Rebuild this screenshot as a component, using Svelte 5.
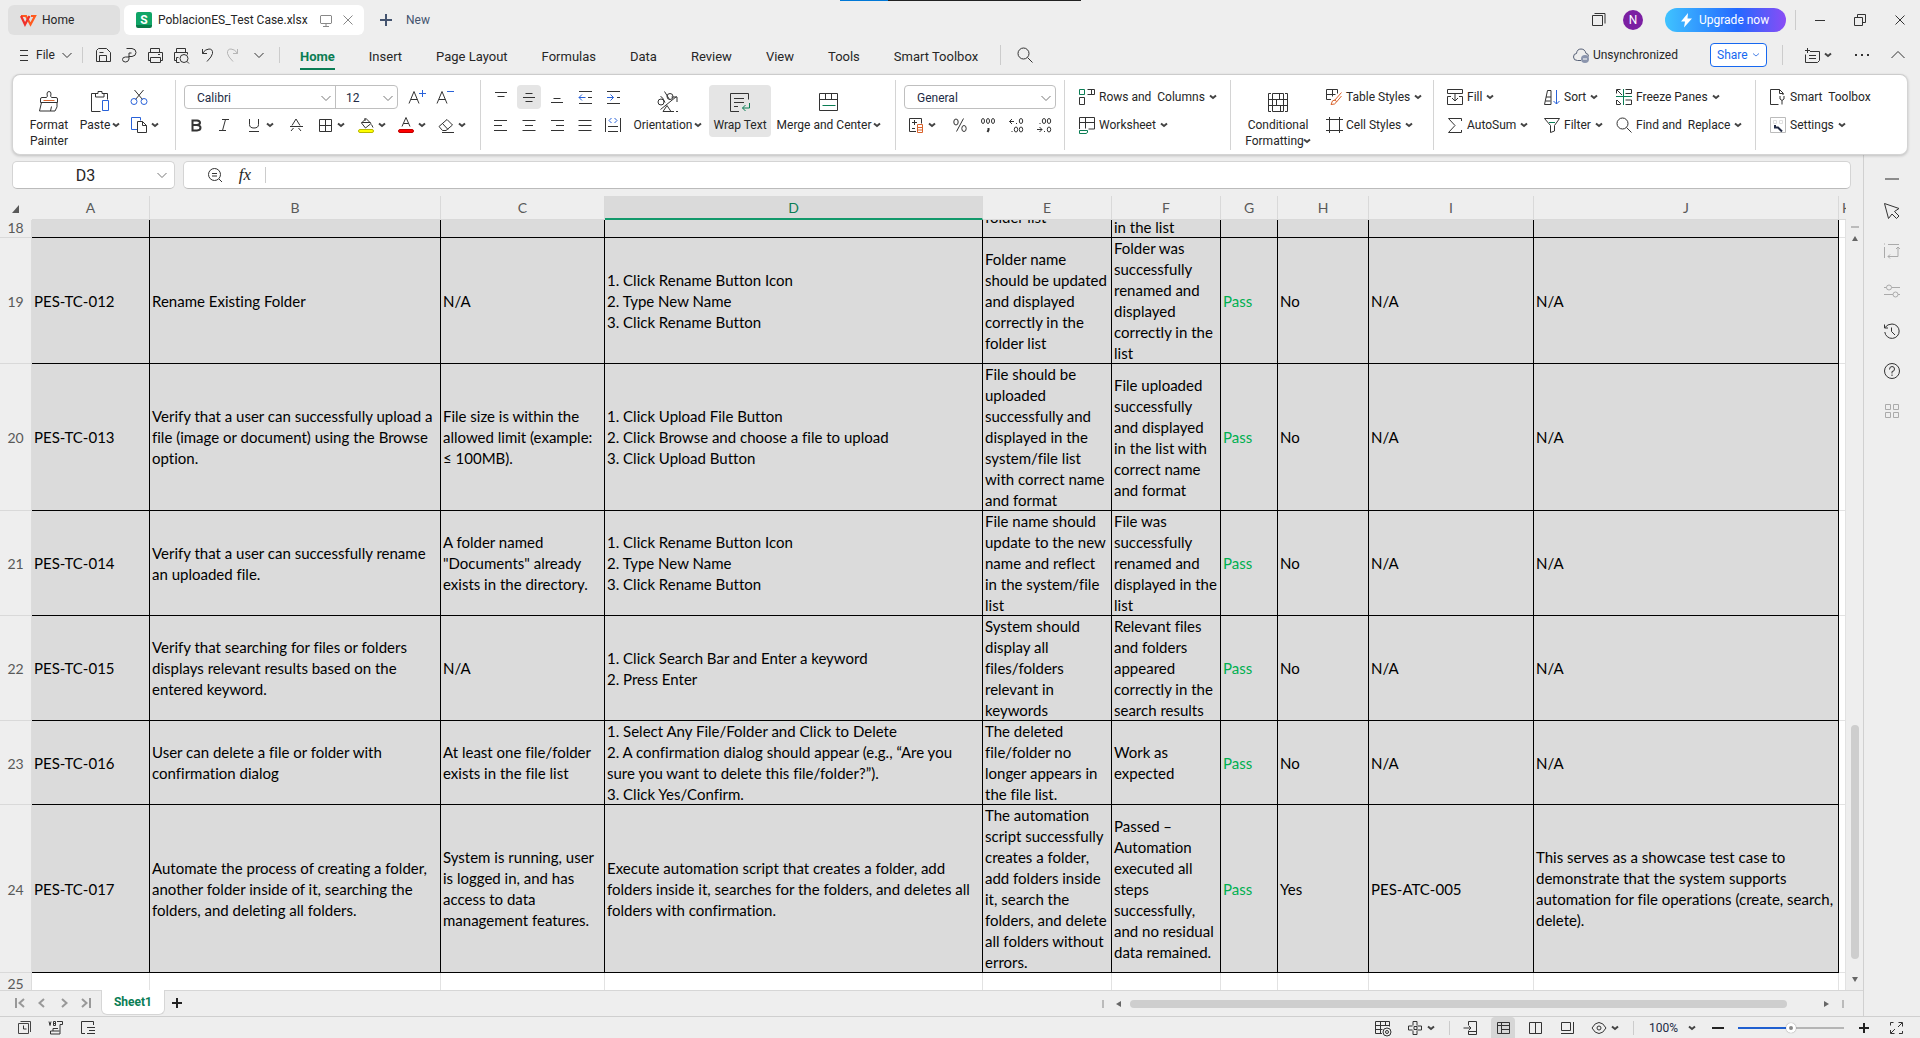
<script>
  const icons = {
    wps: '<path d="M5 8h5l4.500 8.500L19 8h-4" stroke="#ff5a1f" stroke-width="2.200"/><path d="M5 8l4 8.500L13.500 8" stroke="#f0302b" stroke-width="2.200"/>',
    monitor: '<path d="M7 7.500h10a.8.8 0 0 1 .5.500v7a.8.8 0 0 1-.5.500H7a.8.8 0 0 1-.5-.5V8a.8.8 0 0 1 .5-.5zM12 15.500v2.500M9 18.500h6" stroke="#888"/>',
    close: '<path d="M7.500 7.500l9 9M16.500 7.500l-9 9"/>',
    closeTab: '<path d="M7.500 7.500l9 9M16.500 7.500l-9 9" stroke="#888"/>',
    plus: '<path d="M12 6v12M6 12h12" stroke="#44546f" stroke-width="2"/>',
    copyWin: '<path d="M5.500 7.500h10v10h-10zM7.500 5.500h10.500v10"/>',
    bolt: '<path d="M13 5l-7 8.500h4L9 19.500l8-9h-4.500z" fill="#fff" stroke="none"/>',
    min: '<path d="M7 12.500h10"/>',
    restore: '<path d="M6.500 9.500h8v8h-8zM9.500 9.500v-3h8v8h-3"/>',
    burger: '<path d="M8 7.500h8M8 12.500h8M8 17.500h8"/>',
    save: '<path d="M7.500 5.500h8l4 4v9h-14v-11zM8.500 18.500v-6h7v6M8.500 9.500h4"/>',
    link: '<path d="M9.500 5.500h5.500q4 .5 4 4t-4 4h-3v2.500q-.5 3-3.500 3t-3-2.500 3-2.500h3.500v-4h2.500"/>',
    print: '<path d="M7.500 9.500v-4h9v4M7.500 17.500h-2v-8h14v8h-2M7.500 14.500h10v5h-10zM15 11.500h2"/>',
    preview: '<path d="M7.500 9.500v-4h9v4M7.500 17.500h-2v-8h13v2M7.500 19.500h3M7.500 19.500v-5h2"/><circle cx="15" cy="15.500" r="4"/><path d="M18 18.500l2 2"/>',
    undo: '<path d="M7.500 6v4.500H12M7.500 10.500Q10 6 14 6t3.500 4.500Q17 13.500 12 18.500"/>',
    redo: '<path d="M16.500 6v4.500H12M16.500 10.500Q14 6 10 6t-3.500 4.500Q7 13.500 12 18.500" stroke="#b5b5b5"/>',
    down: '<path d="M7.500 10l4.500 4.500 4.500-4.500"/>',
    up: '<path d="M5.500 15l6.500-6.500 6.500 6.500"/>',
    search: '<circle cx="10.500" cy="10.500" r="5.500"/><path d="M14.500 14.500l5 5"/>',
    cloud: '<path d="M12 17.500H8.500q-4 0-4-3.500t3-3.500q.5-4.500 4.500-4.500t5 4.500q2.500 0 2.500 3" stroke="#555f75"/><circle cx="16" cy="16" r="4" fill="#8b95ad" stroke="none"/><path d="M14 16h4" stroke="#fff"/>',
    addNote: '<path d="M10 8.500h9.500v9l-2 2h-12v-8M5 7.500h5M7.500 5v5M9 12.500h7M9 15.500h7"/>',
    dots: '<path d="M5 11h2v2H5zM11 11h2v2h-2zM17 11h2v2h-2z" fill="#333" stroke="none"/>',
    painter: '<path d="M3.500 12.500v-3.500q0-1.500 1.500-1.500h4.500q1.500-1 .5-3.500 0-2.500 2-2.500t2 2.500q-1 2.500.5 3.500h4.500q1.500 0 1.500 1.500v3.500zM4.500 12.500l-2 8.500h15.500q3-4 2-8.500M14.500 16.500l-1 4.500"/><path d="M6.500 10.500h11" stroke="#d9622b"/>',
    paste: '<path d="M8 3.500H3.500v18h9M16 3.500h3.500v6M7.500 3.500h2.500v-2h4v2h2v3.500H7.500z"/><path d="M14.500 10.500h6v10h-6z" stroke="#2962d9"/>',
    cut: '<path d="M7.500 5l8 9.500M16.500 5l-8 9.500"/><circle cx="7" cy="16.500" r="3" stroke="#2962d9"/><circle cx="17" cy="16.500" r="3" stroke="#2962d9"/>',
    copy: '<path d="M10 16.500H4.500v-12h9v3" stroke="#2962d9"/><path d="M10.500 8.500h5l4 4v7h-9zM15.500 8.500v4h4"/>',
    fontUp: '<path d="M4 18.500l5-12 5 12M6 14.500h6.500"/><path d="M17.500 5v7M14 8.500h7" stroke="#2962d9"/>',
    fontDown: '<path d="M4 18.500l5-12 5 12M6 14.500h6.500"/><path d="M14 6.500h7" stroke="#2962d9"/>',
    bold: '<path d="M8.500 7.500h4.500q3 .3 3 2.300t-3 2.200q3.500.3 3.500 2.800t-3.500 2.700H8.500zM9 12h4" stroke-width="2"/>',
    italic: '<path d="M10 6.500h7M7 17.500h7M13.500 6.500l-3 11"/>',
    underline: '<path d="M7.500 6v5.500q0 3.500 4.500 3.500t4.500-3.500V6M7 18.500h10"/>',
    strike: '<path d="M8 12.500l4-6.500 4 6.500M7 18l2.500-3M17 18l-2.500-3M6 13.500h13"/>',
    border: '<path d="M6.500 6.500h12v12h-12zM12.500 6.500v12M6.500 12.500h12"/>',
    fill: '<path d="M12 5.500l5 5-5.500 4.500-4-5zM7.500 9.500h9M11 8V5M17.500 11.500l1.500 3"/><rect x="4.500" y="16.500" width="15" height="3" rx="1.500" fill="#ffff00" stroke="#b8b800"/>',
    fontColor: '<path d="M8 13.500l4-9 4 9M9.500 10.500h5"/><rect x="4.500" y="16.500" width="15" height="3" rx="1.500" fill="#ff0000" stroke="#c00000"/>',
    eraser: '<path d="M5 13.500L13 6.500l5.500 5.500-6.500 5.500H8.500zM8.500 10.500l5.500 6M8 19.500h12"/>',
    top: '<path d="M6 7.500h12M8.500 11.500h7"/>',
    middle: '<path d="M8.500 8.500h7M6 12.500h12M8.500 16.500h7"/>',
    bottom: '<path d="M8.500 13.500h7M6 17.500h12"/>',
    outdent: '<path d="M6 6.500h13M6 18.500h13M15 12.500h4"/><path d="M12.500 12.500H6M9 9.500l-3 3 3 3" stroke="#2962d9"/>',
    indent: '<path d="M6 6.500h13M6 18.500h13M16 12.500h3"/><path d="M6 12.500h6.500M9.500 9.500l3 3-3 3" stroke="#2962d9"/>',
    left: '<path d="M5 7.500h13M5 12.500h8M5 17.500h13"/>',
    center: '<path d="M5.500 7.500h13M8 12.500h8M5.500 17.500h13"/>',
    right: '<path d="M6 7.500h13M11 12.500h8M6 17.500h13"/>',
    justify: '<path d="M5.500 7.500h13M5.500 12.500h13M5.500 17.500h13"/>',
    distribute: '<path d="M4.500 5v14M19.500 5v14M7 13.500h10M7 18.500h10"/><path d="M10.500 5L8 7.500l2.500 2.500M13.500 5L16 7.500 13.500 10" stroke="#2962d9"/>',
    orient: '<circle cx="5" cy="12" r="3"/><path d="M4.500 6.500q2 .5 3 3l1.500 3M8.500 1.500l5 8"/><circle cx="14" cy="6.500" r="3"/><path d="M4.500 19.500L20.500 6.500M15.500 7h5.500v5M7 21.500l4-6 4 6z"/><path d="M15 21.500h7" stroke-dasharray="3 2"/>',
    wrap: '<path d="M11 21.500H2.500v-18h18v6M6 8.500h10M6 12.500h10M6 16.500h4"/><path d="M21.500 13v5h-7M17.500 15l-3 3 3 3" stroke="#0a7d54"/>',
    merge: '<path d="M2.500 3.500h18v17h-18zM2.500 9.500h18M8.500 3.500v6M14.500 3.500v6"/><path d="M5.500 15.500h13" stroke="#0a7d54"/>',
    currency: '<path d="M12 18.500H5.500v-13h12v5M8 9.500h5M10.500 7v5M8 15.500h3"/><path d="M13.500 11.500h5v8h-5zM13.500 14.500h5M13.500 17h5" stroke="#d9622b"/>',
    percent: '<path d="M15.500 5.500l-7 13"/><ellipse cx="8" cy="9" rx="2.200" ry="3"/><ellipse cx="16" cy="15.500" rx="2.200" ry="3"/>',
    thousand: '<g><ellipse cx="7" cy="8" rx="1.500" ry="2.500"/><ellipse cx="12" cy="8" rx="1.500" ry="2.500"/><ellipse cx="17" cy="8" rx="1.500" ry="2.500"/><path d="M12.500 15v2l-1 2" stroke-width="2"/></g>',
    decInc: '<path d="M10 8.500H5.500M8 6l-2.500 2.500L8 11M12 10.500h1M7.500 18.500h1"/><ellipse cx="17" cy="8" rx="1.700" ry="2.500"/><ellipse cx="12" cy="16.500" rx="1.700" ry="2.500"/><ellipse cx="17" cy="16.500" rx="1.700" ry="2.500"/>',
    decDec: '<path d="M5 16.500h5M7.500 14l2.500 2.500L7.500 19M12 18.500h1M7.500 10.500h1"/><ellipse cx="12" cy="8" rx="1.700" ry="2.500"/><ellipse cx="17" cy="8" rx="1.700" ry="2.500"/><ellipse cx="17" cy="16.500" rx="1.700" ry="2.500"/>',
    rowscols: '<path d="M12.500 4.500h7v5h-7M16.500 4.500v5M4.500 12.500h5v7h-5z"/><path d="M4.500 4.500h5v5h-5z" stroke="#0a7d54"/>',
    worksheet: '<path d="M4.500 16v-11.500h15v11.500h-6M4.500 9.500h15M10.500 4.500v11"/><path d="M4.500 17.500h8v2l-1.500 1h-6.500z" stroke="#0a7d54"/>',
    cond: '<path d="M5 3.500H2.500v18H5M19 3.500h2.500v18H19M6.500 3.500h11v18h-11zM6.500 9.500h11M6.500 15.500h11M2.500 9.500h4M2.500 15.500h4M17.500 9.500h4M17.500 15.500h4M13.500 3.500v6M10.500 9.500v6M14.500 15.500v6"/>',
    tableStyles: '<path d="M9 14.500H4.500v-10h11v4M4.500 9.500h9M10.500 4.500v7"/><path d="M19.500 7.500l-7 8M9 19.500q1-5 4-4.500 3 1.500-.5 4zM19.500 11l-5 6" stroke="#d9622b"/>',
    cellStyles: '<path d="M7.500 4v16M17.500 4v16M4 6.500h17M4 17.500h17"/>',
    fillCells: '<path d="M4.500 8.500v-4h15v4zM8 11.500H4.500v8h15v-8H16M12 8.500v7M9 13l3 3 3-3"/>',
    sum: '<path d="M18.500 8V5.500h-13l6.500 7-6.500 7h13V17"/>',
    sort: '<path d="M4.500 19.500l3-14h3.500v14zM6 12h5M5.500 16h5"/><path d="M16.500 5v14M13.500 16l3 3 3-3" stroke="#2962d9"/>',
    filter: '<path d="M4.500 5.500h15l-5 7v5.500l-4 1.500v-7z"/><path d="M9 9.500h6" stroke="#0a7d54"/>',
    freeze: '<path d="M8.500 4.500h-4v4M13.500 4.500h6v4h-6M4.500 15v4.500h4M13.500 15h6v4.500h-6M5 5l5 5M5 15l4 4"/><path d="M11.500 4v16M4 11.500h16" stroke="#0a7d54"/>',
    toolbox: '<path d="M12.500 19.500h-8v-15h9l3.500 3.500v2M13.500 4.500v4h4M14 11v3l2 1.500 2-1.500v-3M16 15.500v4"/>',
    settings: '<path d="M4.500 4.500h15v15h-15z" stroke="#bbb"/><path d="M7.500 7.500h3v3h-3zM13.500 7.500h3v3h-3z" stroke="#e0e0e0"/><path d="M9 12v2.500h3l4 4" stroke="#222b45" stroke-width="2"/>',
    zoom: '<circle cx="11.500" cy="11.500" r="6"/><path d="M9 10.500h5M9 13h5M16 16l3 3"/>',
    dash: '<path d="M5 12h14" stroke="#8c8c8c" stroke-width="2"/>',
    cursor: '<path d="M4.500 4.500l4 15 3.500-4.500 4.500 4.500 2.500-2.500-4.500-4.500 4.500-3z"/>',
    swap: '<path d="M8 5.500h11M4.500 8v11M18 8v9.500H8M16 10l2-2 2 2M10 15.500l-2 2 2 2M4 5h1" stroke="#aaa"/>',
    sliders: '<circle cx="9" cy="8.500" r="2.500" stroke="#aaa"/><circle cx="15.500" cy="15.500" r="2.500" stroke="#aaa"/><path d="M4 8.500h2.500M11.500 8.500H20M4 15.500h9M18 15.500h2" stroke="#aaa"/>',
    history: '<path d="M5 8.500Q7.500 5 12 5a7.200 7.200 0 1 1-7.200 8M4.500 5.500v3.500H8M11.500 8.500v4l3.500 3.500"/>',
    help: '<circle cx="12" cy="12" r="7.500"/><path d="M9.500 10.500q0-3 2.500-3t2.500 2.500-2.500 2.500v2M12 15.500v1.500"/>',
    grid: '<path d="M5.500 5.500h5v5h-5zM13.500 5.500h5v5h-5zM5.500 13.500h5v5h-5zM13.500 13.500h5v5h-5z" stroke="#aaa"/>',
    first: '<path d="M8 7v10M16 8l-4.500 4 4.500 4" stroke="#999" stroke-width="2"/>',
    prev: '<path d="M14 8l-4.500 4 4.500 4" stroke="#999" stroke-width="2"/>',
    next: '<path d="M10 8l4.500 4-4.500 4" stroke="#999" stroke-width="2"/>',
    last: '<path d="M8 8l4.500 4L8 16M16 7v10" stroke="#999" stroke-width="2"/>',
    plusSmall: '<path d="M12 7v10M7 12h10" stroke="#222" stroke-width="2"/>',
    minusSmall: '<path d="M6 12h12" stroke="#222" stroke-width="2"/>',
    clock: '<path d="M6.500 7.500h10v10h-10zM8.500 5.500h10v10.500" stroke="#444"/><path d="M11.500 9.500v3.500h3"/>',
    vba: '<path d="M5 5.500l1 4 1-4M9.500 5.500v4h2v-4zM9.500 7.500h2M13 5.500h5.500v3h-2.500v9.500H6.500v-3h9M9 15v-2.500h5"/>',
    outline: '<path d="M17.500 9V5.500h-12v12H9M11 11.500h8M13 14.500h6M11 17.500h8"/>',
    statTable: '<path d="M11 17.500H4.500v-12h14v5M4.500 9.500h14M4.500 13.500h7M9.500 5.500v12M14.500 5.500v4"/><circle cx="16" cy="16" r="4"/><circle cx="16" cy="16" r="1.500"/>',
    cross: '<path d="M10 9.500v-4h4v4M10 14.500v4h4v-4M9.500 10h-4v4h4M14.500 10h4v4h-4M11 10.500h3v3h-3z"/>',
    device: '<path d="M9.500 9v-3.500h8v13h-8V15M4.500 12h7.500M9.500 9.500L12 12l-2.500 2.500M9.500 15.500h8"/>',
    normal: '<path d="M6.500 6.500h12v11h-12zM6.500 9.500h12M10.500 6.500v11M10.500 13.500h8"/>',
    pageBreak: '<path d="M6.500 6.500h12v11h-12zM12.500 6.500v11"/>',
    pageLayout: '<path d="M6.500 6.500h9v8h-9zM18.500 6v11.500H6"/>',
    eye: '<path d="M5 12q3-5.500 7-5.500t7 5.500q-3 5.500-7 5.500T5 12z"/><circle cx="12" cy="12" r="2"/>',
    full: '<path d="M14.500 6.500h4v4M9.500 6.500h-3v3M6.500 14v3.500h4M15 17.500h3.500V15M18 7l-4 4M7 17l4-4"/>'
  };

  const navTabs = ['Home', 'Insert', 'Page Layout', 'Formulas', 'Data', 'Review', 'View', 'Tools', 'Smart Toolbox'];

  const columns = [
    { id: 'A', w: 118 }, { id: 'B', w: 291 }, { id: 'C', w: 164 }, { id: 'D', w: 378 }, { id: 'E', w: 129 },
    { id: 'F', w: 109 }, { id: 'G', w: 57 }, { id: 'H', w: 91 }, { id: 'I', w: 165 }, { id: 'J', w: 305 }
  ];

  // The row at the top edge is only partly in view: just its last line remains.
  const edgeRow = { n: 18, cells: ['', '', '', '', 'folder list', 'in the list', '', '', '', ''] };

  const rows = [
    { n: 19, cells: ['PES-TC-012', 'Rename Existing Folder', 'N/A', '1. Click Rename Button Icon\n2. Type New Name\n3. Click Rename Button', 'Folder name\nshould be updated\nand displayed\ncorrectly in the\nfolder list', 'Folder was\nsuccessfully\nrenamed and\ndisplayed\ncorrectly in the\nlist', 'Pass', 'No', 'N/A', 'N/A'] },
    { n: 20, cells: ['PES-TC-013', 'Verify that a user can successfully upload a\nfile (image or document) using the Browse\noption.', 'File size is within the\nallowed limit (example:\n≤ 100MB).', '1. Click Upload File Button\n2. Click Browse and choose a file to upload\n3. Click Upload Button', 'File should be\nuploaded\nsuccessfully and\ndisplayed in the\nsystem/file list\nwith correct name\nand format', 'File uploaded\nsuccessfully\nand displayed\nin the list with\ncorrect name\nand format', 'Pass', 'No', 'N/A', 'N/A'] },
    { n: 21, cells: ['PES-TC-014', 'Verify that a user can successfully rename\nan uploaded file.', 'A folder named\n"Documents" already\nexists in the directory.', '1. Click Rename Button Icon\n2. Type New Name\n3. Click Rename Button', 'File name should\nupdate to the new\nname and reflect\nin the system/file\nlist', 'File was\nsuccessfully\nrenamed and\ndisplayed in the\nlist', 'Pass', 'No', 'N/A', 'N/A'] },
    { n: 22, cells: ['PES-TC-015', 'Verify that searching for files or folders\ndisplays relevant results based on the\nentered keyword.', 'N/A', '1. Click Search Bar and Enter a keyword\n2. Press Enter', 'System should\ndisplay all\nfiles/folders\nrelevant in\nkeywords', 'Relevant files\nand folders\nappeared\ncorrectly in the\nsearch results', 'Pass', 'No', 'N/A', 'N/A'] },
    { n: 23, cells: ['PES-TC-016', 'User can delete a file or folder with\nconfirmation dialog', 'At least one file/folder\nexists in the file list', '1. Select Any File/Folder and Click to Delete\n2. A confirmation dialog should appear (e.g., “Are you\nsure you want to delete this file/folder?”).\n3. Click Yes/Confirm.', 'The deleted\nfile/folder no\nlonger appears in\nthe file list.', 'Work as\nexpected', 'Pass', 'No', 'N/A', 'N/A'] },
    { n: 24, cells: ['PES-TC-017', 'Automate the process of creating a folder,\nanother folder inside of it, searching the\nfolders, and deleting all folders.', 'System is running, user\nis logged in, and has\naccess to data\nmanagement features.', 'Execute automation script that creates a folder, add\nfolders inside it, searches for the folders, and deletes all\nfolders with confirmation.', 'The automation\nscript successfully\ncreates a folder,\nadd folders inside\nit, search the\nfolders, and delete\nall folders without\nerrors.', 'Passed –\nAutomation\nexecuted all\nsteps\nsuccessfully,\nand no residual\ndata remained.', 'Pass', 'Yes', 'PES-ATC-005', 'This serves as a showcase test case to\ndemonstrate that the system supports\nautomation for file operations (create, search,\ndelete).'] }
  ];

  let zoomLevel = $state(50);
</script>

{#snippet icon(name)}
  <svg class="icon" viewBox="0 0 24 24" aria-hidden="true">{@html icons[name]}</svg>
{/snippet}

{#snippet caret()}
  <svg class="caret" viewBox="0 0 8 8" aria-hidden="true"><path d="M1 2.500L4 5l3-2.500" /></svg>
{/snippet}

{#snippet iconButton(name, label, hasCaret = false)}
  <button class="tool" aria-label={label}>{@render icon(name)}{#if hasCaret}{@render caret()}{/if}</button>
{/snippet}

{#snippet textButton(name, label, hasCaret = true)}
  <button class="tool labelled">{@render icon(name)}<span>{label}</span>{#if hasCaret}{@render caret()}{/if}</button>
{/snippet}

<div class="app">
  <div class="strip"></div>

  <header class="titlebar">
    <button class="doc-tab home-tab">{@render icon('wps')}<span>Home</span></button>
    <div class="doc-tab active">
      <span class="sheet-logo">S</span>
      <span class="doc-name">PoblacionES_Test Case.xlsx</span>
      {@render iconButton('monitor', 'Show in window')}
      {@render iconButton('closeTab', 'Close tab')}
    </div>
    <button class="new-tab">{@render icon('plus')}<span>New</span></button>
    <div class="window-tools">
      {@render iconButton('copyWin', 'Windows')}
      <button class="avatar" aria-label="Account">N</button>
      <button class="upgrade">{@render icon('bolt')}<span>Upgrade now</span></button>
      <span class="vline"></span>
      <div class="window-buttons">
        {@render iconButton('min', 'Minimize')}
        {@render iconButton('restore', 'Restore')}
        {@render iconButton('close', 'Close')}
      </div>
    </div>
  </header>

  <div class="menubar">
    <button class="file-menu">{@render icon('burger')}<span>File</span>{@render icon('down')}</button>
    <span class="vline short"></span>
    <div class="quick">
      {@render iconButton('save', 'Save')}
      {@render iconButton('link', 'Export')}
      {@render iconButton('print', 'Print')}
      {@render iconButton('preview', 'Print preview')}
      {@render iconButton('undo', 'Undo')}
      {@render iconButton('redo', 'Redo')}
      {@render iconButton('down', 'Customize')}
    </div>
    <span class="vline short"></span>
    <nav class="nav">
      {#each navTabs as tab, i}
        <button class:current={i === 0}>{tab}</button>
      {/each}
    </nav>
    <span class="vline"></span>
    <div class="find">{@render iconButton('search', 'Search')}</div>
    <div class="share-tools">
      <button class="sync">{@render icon('cloud')}<span>Unsynchronized</span></button>
      <button class="share"><span>Share</span>{@render caret()}</button>
      <span class="vline"></span>
      <div class="note">{@render iconButton('addNote', 'Comments', true)}</div>
      {@render iconButton('dots', 'More')}
      <div class="collapse">{@render iconButton('up', 'Collapse ribbon')}</div>
    </div>
  </div>

  <section class="ribbon" aria-label="Home tools">
    <div class="group clipboard">
      <button class="big">{@render icon('painter')}<span>Format<br />Painter</span></button>
      <button class="big paste">{@render icon('paste')}<span>Paste {@render caret()}</span></button>
      <div class="stack">
        {@render iconButton('cut', 'Cut')}
        {@render iconButton('copy', 'Copy', true)}
      </div>
    </div>

    <div class="group font">
      <div class="font-top">
        <div class="combo">
          <div class="pick family">
            <select aria-label="Font"><option>Calibri</option></select>
            {@render icon('down')}
          </div>
          <div class="pick size">
            <select aria-label="Font size"><option>12</option></select>
            {@render icon('down')}
          </div>
        </div>
        {@render iconButton('fontUp', 'Increase font size')}
        {@render iconButton('fontDown', 'Decrease font size')}
      </div>
      <div class="font-row">
        {@render iconButton('bold', 'Bold')}
        {@render iconButton('italic', 'Italic')}
        {@render iconButton('underline', 'Underline', true)}
        {@render iconButton('strike', 'Strikethrough')}
        {@render iconButton('border', 'Borders', true)}
        {@render iconButton('fill', 'Fill color', true)}
        {@render iconButton('fontColor', 'Font color', true)}
        {@render iconButton('eraser', 'Clear', true)}
      </div>
    </div>

    <div class="group align">
      <div class="align-grid">
        {@render iconButton('top', 'Align top')}
        <button class="tool on" aria-label="Align middle">{@render icon('middle')}</button>
        {@render iconButton('bottom', 'Align bottom')}
        {@render iconButton('outdent', 'Decrease indent')}
        {@render iconButton('indent', 'Increase indent')}
        {@render iconButton('left', 'Align left')}
        {@render iconButton('center', 'Align center')}
        {@render iconButton('right', 'Align right')}
        {@render iconButton('justify', 'Justify')}
        {@render iconButton('distribute', 'Distribute')}
      </div>
      <button class="big">{@render icon('orient')}<span>Orientation {@render caret()}</span></button>
      <button class="big on">{@render icon('wrap')}<span>Wrap Text</span></button>
      <button class="big">{@render icon('merge')}<span>Merge and Center {@render caret()}</span></button>
    </div>

    <div class="group number">
      <div class="combo">
        <div class="pick">
          <select aria-label="Number format"><option>General</option></select>
          {@render icon('down')}
        </div>
      </div>
      <div class="number-row">
        {@render iconButton('currency', 'Currency', true)}
        {@render iconButton('percent', 'Percent')}
        {@render iconButton('thousand', 'Thousands separator')}
        {@render iconButton('decInc', 'Increase decimal')}
        {@render iconButton('decDec', 'Decrease decimal')}
      </div>
    </div>

    <div class="group rowcol">
      <div class="stack">
        {@render textButton('rowscols', 'Rows and  Columns')}
        {@render textButton('worksheet', 'Worksheet')}
      </div>
    </div>

    <div class="group styles">
      <button class="big">{@render icon('cond')}<span>Conditional<br />Formatting{@render caret()}</span></button>
      <div class="stack">
        {@render textButton('tableStyles', 'Table Styles')}
        {@render textButton('cellStyles', 'Cell Styles')}
      </div>
    </div>

    <div class="group edit">
      <div class="stack">
        {@render textButton('fillCells', 'Fill')}
        {@render textButton('sum', 'AutoSum')}
      </div>
      <div class="stack">
        {@render textButton('sort', 'Sort')}
        {@render textButton('filter', 'Filter')}
      </div>
      <div class="stack">
        {@render textButton('freeze', 'Freeze Panes')}
        {@render textButton('search', 'Find and  Replace')}
      </div>
    </div>

    <div class="group extra">
      <div class="stack">
        {@render textButton('toolbox', 'Smart  Toolbox', false)}
        {@render textButton('settings', 'Settings')}
      </div>
    </div>
  </section>

  <div class="work">
    <main class="sheet">
      <div class="formula-bar">
        <div class="name-box">
          <input aria-label="Cell reference" value="D3" />
          {@render icon('down')}
        </div>
        <div class="formula">
          {@render iconButton('zoom', 'Browse formula')}
          <button class="fx" aria-label="Insert function">fx</button>
          <span class="vline short"></span>
          <input aria-label="Formula" />
        </div>
      </div>

      <div class="grid-area">
        <div class="viewport">
          <table>
            <colgroup>
              <col class="head-col" />
              {#each columns as c}
                <col style:width="{c.w}px" />
              {/each}
              <col />
            </colgroup>
            <thead>
              <tr>
                <th class="corner" aria-label="Select all"><svg viewBox="0 0 8 8" aria-hidden="true"><path d="M7 0v8H0z" /></svg></th>
                {#each columns as c}
                  <th class:picked={c.id === 'D'}>{c.id}</th>
                {/each}
                <th class="cut-off">K</th>
              </tr>
            </thead>
            <tbody>
              <tr class="edge">
                <th><div class="sliver">{edgeRow.n}</div></th>
                {#each edgeRow.cells as cell, i}
                  <td><div class="sliver" class:raised={i === 4}>{cell}</div></td>
                {/each}
                <td class="blank"></td>
              </tr>
              {#each rows as row}
                <tr>
                  <th>{row.n}</th>
                  {#each row.cells as cell, i}
                    <td class:pass={i === 6}>{cell}</td>
                  {/each}
                  <td class="blank"></td>
                </tr>
              {/each}
              <tr class="empty">
                <th>25</th>
                {#each columns as c (c.id)}<td></td>{/each}
                <td></td>
              </tr>
            </tbody>
          </table>
        </div>
        <div class="vscroll">
          <span class="split"></span>
          <span class="arrow-up"></span>
          <div class="vtrack"><div class="vthumb"></div></div>
          <span class="arrow-down"></span>
        </div>
      </div>

      <div class="sheet-tabs">
        <div class="tab-nav">
          {@render iconButton('first', 'First sheet')}
          {@render iconButton('prev', 'Previous sheet')}
          {@render iconButton('next', 'Next sheet')}
          {@render iconButton('last', 'Last sheet')}
        </div>
        <button class="sheet-tab">Sheet1</button>
        {@render iconButton('plusSmall', 'Add sheet')}
        <div class="hscroll">
          <span class="bar"></span>
          <span class="arrow-left"></span>
          <div class="htrack"><div class="hthumb"></div></div>
          <span class="arrow-right"></span>
          <span class="bar"></span>
        </div>
      </div>
    </main>

    <aside class="side">
      {@render iconButton('dash', 'Collapse')}
      {@render iconButton('cursor', 'Select')}
      {@render iconButton('swap', 'Transform')}
      {@render iconButton('sliders', 'Properties')}
      {@render iconButton('history', 'History')}
      {@render iconButton('help', 'Help')}
      {@render iconButton('grid', 'Apps')}
    </aside>
  </div>

  <footer class="status">
    <div class="status-left">
      {@render iconButton('clock', 'Backup')}
      {@render iconButton('vba', 'Macros')}
      {@render iconButton('outline', 'Outline')}
    </div>
    <div class="status-right">
      {@render iconButton('statTable', 'Table info')}
      {@render iconButton('cross', 'Reading highlight', true)}
      <span class="vline small lead"></span>
      <div class="views">
        {@render iconButton('device', 'Send to device')}
        <button class="tool on" aria-label="Normal view">{@render icon('normal')}</button>
        {@render iconButton('pageBreak', 'Page break view')}
        {@render iconButton('pageLayout', 'Page layout view')}
        {@render iconButton('eye', 'Eye care', true)}
      </div>
      <span class="vline small"></span>
      <button class="percent">100%{@render caret()}</button>
      {@render iconButton('minusSmall', 'Zoom out')}
      <input class="zoom" type="range" aria-label="Zoom" min="0" max="100" bind:value={zoomLevel} />
      {@render iconButton('plusSmall', 'Zoom in')}
      {@render iconButton('full', 'Full screen')}
    </div>
  </footer>
</div>

<style>
  :global(body) {
    margin: 0;
    background: #eee;
  }

  .app {
    display: flex;
    flex-direction: column;
    height: 100vh;
    overflow: hidden;
    position: relative;
    background: #eee;
    color: #262626;
    font-family: Roboto, "Liberation Sans", sans-serif;
    font-size: 12px;
    line-height: 16px;
  }

  .app :where(button, input, select) {
    font: inherit;
    color: inherit;
    border: 0;
    padding: 0;
    margin: 0;
    background: none;
    outline: none;
  }

  .app :where(button) {
    display: flex;
    align-items: center;
    flex: none;
    white-space: pre;
  }

  .strip {
    position: absolute;
    top: 0;
    left: 840px;
    width: 241px;
    height: 1px;
    background: linear-gradient(to right, #0078d7 48px, #222 48px);
  }

  .icon {
    display: block;
    flex: none;
    width: 24px;
    height: 24px;
    fill: none;
    stroke: #333;
    stroke-width: 1;
  }

  .caret {
    flex: none;
    width: 8px;
    height: 8px;
    fill: none;
    stroke: #444;
    stroke-width: 2;
  }

  .vline {
    flex: none;
    width: 1px;
    height: 20px;
    background: #ccc;
  }

  .vline.short { height: 16px; }
  .vline.small { height: 14px; }

  .on { background: #e5e5e5; border-radius: 4px; }

  /* title bar */
  .titlebar {
    display: flex;
    align-items: center;
    height: 40px;
    padding: 0 8px;
  }

  .app .doc-tab {
    display: flex;
    align-items: center;
    height: 30px;
    border-radius: 6px;
    background: #e0e0e0;
  }

  .app .home-tab {
    width: 112px;
    padding-left: 8px;
    gap: 2px;
  }

  .app .doc-tab.active {
    width: 240px;
    margin-left: 4px;
    background: #fff;
  }

  .sheet-logo {
    width: 16px;
    height: 16px;
    margin: 0 6px 0 12px;
    border-radius: 2px;
    background: linear-gradient(#10a567 80%, #087a48 80%);
    color: #fff;
    font-weight: 700;
    text-align: center;
  }

  .doc-name { flex: 1; white-space: nowrap; }
  .doc-tab.active .tool { margin-right: -2px; }
  .doc-tab.active .tool:last-child { margin-right: 4px; }

  .app .new-tab {
    margin-left: 10px;
    gap: 8px;
    color: #44546f;
  }

  .window-tools {
    display: flex;
    align-items: center;
    margin-left: auto;
  }

  .app .avatar {
    justify-content: center;
    width: 20px;
    height: 20px;
    margin: 0 22px 0 12px;
    border-radius: 50%;
    background: #7b1fa2;
    color: #fff;
  }

  .app .upgrade {
    width: 121px;
    height: 24px;
    margin-right: 9px;
    padding-left: 10px;
    border-radius: 12px;
    background: linear-gradient(to right, #3fc3ff, #2469ff 60%, #8a4cf5);
    color: #fff;
  }

  .window-buttons {
    display: flex;
    gap: 16px;
    margin-left: 12px;
  }

  /* menu row */
  .menubar {
    display: flex;
    align-items: center;
    height: 34px;
    padding: 0 10px 4px 12px;
    box-sizing: border-box;
  }

  .file-menu { width: 70px; }
  .quick { display: flex; gap: 2px; margin: 0 8px; }

  .nav {
    display: flex;
    gap: 34px;
    margin: 0 22px 0 20px;
    font-size: 13px;
  }

  .nav button {
    height: 29px;
    padding-top: 3px;
    box-sizing: border-box;
    border-top: 2px solid transparent;
    border-bottom: 2px solid transparent;
  }

  .nav .current {
    color: #0a7d54;
    font-weight: 700;
    border-bottom-color: #0a7d54;
  }

  .find { margin-left: 12px; }

  .share-tools {
    display: flex;
    align-items: center;
    margin-left: auto;
  }

  .app .share {
    justify-content: space-between;
    box-sizing: border-box;
    width: 57px;
    height: 24px;
    margin: 0 15px 0 32px;
    padding: 0 6px;
    border: 1px solid #1668f0;
    border-radius: 4px;
    background: #fff;
    color: #1668f0;
  }

  .share .caret { stroke: #4f86e8; stroke-width: 1; }
  .note { margin: 0 18px 0 17px; }
  .collapse { margin-left: 12px; }

  /* ribbon */
  .ribbon {
    display: flex;
    flex: none;
    height: 81px;
    margin: 0 12px;
    box-sizing: border-box;
    padding: 5px 0 4px;
    border: 1px solid #d4d4d4;
    border-top-color: #ccc;
    border-radius: 8px;
    background: #fff;
    box-shadow: 0 1px 3px #0003;
    position: relative;
  }

  .group {
    display: flex;
    flex: none;
    box-sizing: border-box;
    padding-top: 3px;
    border-right: 1px solid #d4d4d4;
  }

  .group.extra { border: 0; padding-left: 10px; }
  .tool { height: 28px; }
  .stack { display: flex; flex-direction: column; }

  .app .big {
    flex-direction: column;
    align-self: flex-start;
    box-sizing: border-box;
    height: 52px;
    margin-top: 2px;
    padding-top: 5px;
    gap: 3px;
    text-align: center;
  }

  .big .caret { margin-left: -1px; }

  .clipboard { width: 163px; padding-left: 12px; }
  .clipboard .big { width: 48px; }
  .clipboard .big.paste { width: 54px; }

  .font { flex-direction: column; width: 305px; padding-left: 8px; }
  .font-top { display: flex; align-items: center; height: 28px; }
  .font-top .combo { width: 214px; margin-right: 7px; }
  .font-top .tool + .tool { margin-left: 4px; }
  .font-row {
    display: grid;
    grid-template-columns: 28px 30px 42px 29px 41px 40px 40px 32px;
  }

  .combo {
    display: flex;
    box-sizing: border-box;
    height: 24px;
    border: 1px solid #bfbfbf;
    border-radius: 4px;
  }

  .pick { display: grid; flex: 1; align-items: center; color: #222b45; }
  .pick.size { flex: none; width: 61px; border-left: 1px solid #bfbfbf; }
  .pick select,
  .pick .icon { grid-area: 1 / 1; }
  .pick select { appearance: none; height: 22px; padding-left: 12px; }
  .pick.size select { padding-left: 10px; }
  .pick .icon { justify-self: end; margin-right: -3px; stroke: #777; pointer-events: none; }

  .align { width: 415px; padding-left: 6px; }
  .align-grid {
    display: grid;
    grid-template-columns: repeat(5, 28px);
    grid-auto-rows: 28px;
    place-items: center;
  }
  .align-grid .on { height: 24px; }
  .align .big { width: 82px; }
  .align .big.on { width: 62px; }
  .align .big.on + .big { width: 112px; margin-left: 2px; }

  .number { flex-direction: column; width: 169px; padding-left: 8px; }
  .number .combo { width: 152px; margin: 2px 0; }
  .number-row {
    display: grid;
    grid-template-columns: 44px repeat(4, 28px);
  }

  .rowcol { width: 166px; padding-left: 10px; }
  .labelled .caret { margin-left: 4px; }

  .styles { width: 203px; padding-left: 13px; }
  .styles .big { width: 68px; margin-right: 10px; }

  .edit { width: 322px; padding-left: 9px; }
  .edit .stack:nth-child(1) { width: 97px; }
  .edit .stack:nth-child(2) { width: 72px; }

  /* work area */
  .work { display: flex; flex: 1; min-height: 0; }

  .sheet {
    display: flex;
    flex-direction: column;
    flex: 1;
    min-width: 0;
  }

  .formula-bar {
    display: flex;
    gap: 8px;
    height: 28px;
    padding: 6px 12px 7px;
  }

  .name-box,
  .formula {
    display: flex;
    align-items: center;
    box-sizing: border-box;
    border: 1px solid #d4d4d4;
    border-bottom-color: #bbb;
    border-radius: 5px;
    background: #fff;
  }

  .name-box { width: 163px; }
  .name-box input { flex: 1; min-width: 0; padding-left: 8px; font-size: 16px; text-align: center; }
  .name-box .icon { stroke: #777; }
  .formula { flex: 1; padding-left: 19px; }
  .formula .fx {
    justify-content: center;
    width: 30px;
    margin: 0 5px 0 3px;
    font-family: "Liberation Serif", serif;
    font-style: italic;
    font-size: 17px;
  }
  .formula input { flex: 1; height: 24px; padding-left: 6px; }

  .grid-area { display: flex; flex: 1; min-height: 0; }

  .viewport {
    flex: 1;
    min-width: 0;
    overflow: hidden;
    background: #fff;
  }

  table {
    width: 100%;
    table-layout: fixed;
    border-collapse: separate;
    border-spacing: 0;
    font-family: Lato, "Liberation Sans", sans-serif;
    font-size: 15px;
    font-variant-ligatures: none;
    line-height: 21px;
    color: #000;
  }

  .head-col { width: 32px; }

  th {
    padding: 0;
    background: #eee;
    color: #595959;
    font-size: 14px;
    font-weight: 400;
  }

  thead th {
    height: 24px;
    box-sizing: border-box;
    border-right: 1px solid #d9d9d9;
    border-bottom: 1px solid #d9d9d9;
  }

  thead .corner { border-right-color: #eee; border-bottom-color: #eee; }
  .corner svg { width: 8px; height: 8px; fill: #595959; }
  thead .picked { background: #dadada; color: #0a7d54; border-bottom: 2px solid #12996b; }
  thead .cut-off { border-right: 0; overflow: hidden; text-align: left; padding-left: 3px; }

  /* inset lines keep every row a whole number of text lines high */
  tbody th {
    border-right: 1px solid #dcdcdc;
    box-shadow: inset 0 -1px #d9d9d9;
  }

  td {
    padding: 0 0 0 2px;
    white-space: pre;
    vertical-align: middle;
    border-right: 1px solid #000;
    box-shadow: inset 0 -1px #000;
    background: #dbdbdb;
  }

  .pass { color: #00b050; }

  td.blank,
  .empty td {
    background: #fff;
    border-color: #e2e2e2;
    box-shadow: inset 0 -1px #e2e2e2;
  }

  .sliver {
    display: flex;
    align-items: flex-end;
    height: 18px;
    box-sizing: border-box;
    overflow: hidden;
  }

  th .sliver { justify-content: center; }
  .sliver.raised { padding-bottom: 10px; }

  .vscroll {
    display: flex;
    flex-direction: column;
    align-items: center;
    flex: none;
    width: 17px;
    padding: 30px 0 8px;
    box-sizing: border-box;
    gap: 8px;
  }

  .split { width: 8px; height: 2px; background: #bbb; }
  .vtrack { flex: 1; display: flex; flex-direction: column; justify-content: flex-end; padding-bottom: 10px; }
  .vthumb { width: 8px; height: 33%; border-radius: 4px; background: #cecece; }
  .arrow-up,
  .arrow-down { border: 3px solid transparent; }
  .arrow-up { border-top: 0; border-bottom: 5px solid #666; }
  .arrow-down { border-bottom: 0; border-top: 5px solid #666; }

  .sheet-tabs {
    display: flex;
    flex: none;
    height: 26px;
    box-sizing: border-box;
    border-top: 1px solid #d6d6d6;
  }

  .sheet-tabs .tool { height: 24px; }
  .tab-nav { display: flex; width: 93px; padding-left: 8px; }
  .tab-nav .tool { margin-right: -2px; }

  .app .sheet-tab {
    justify-content: center;
    box-sizing: border-box;
    width: 64px;
    height: 25px;
    margin-top: -1px;
    border: 1px solid #d6d6d6;
    border-top: 0;
    border-radius: 0 0 6px 6px;
    background: #fff;
    color: #0a7d54;
    font-weight: 700;
  }

  .hscroll {
    display: flex;
    align-items: center;
    width: 742px;
    margin: 0 19px 0 auto;
    height: 25px;
  }

  .bar { width: 2px; height: 8px; background: #bbb; }
  .htrack { flex: 1; padding-right: 37px; }
  .hthumb { height: 8px; border-radius: 4px; background: #cecece; }
  .arrow-left,
  .arrow-right { border: 3px solid transparent; }
  .arrow-left { margin: 0 9px 0 12px; border-left: 0; border-right: 5px solid #666; }
  .arrow-right { margin-right: 13px; border-right: 0; border-left: 5px solid #666; }

  .side {
    display: flex;
    flex-direction: column;
    align-items: center;
    flex: none;
    width: 56px;
    border-left: 1px solid #d0d0d0;
    padding-top: 10px;
    gap: 12px;
  }

  .side .tool:first-child { margin-bottom: -8px; }

  /* status bar */
  .status {
    display: flex;
    justify-content: space-between;
    flex: none;
    height: 22px;
    box-sizing: border-box;
    border-top: 1px solid #cfcfcf;
  }

  .status .tool { height: 22px; }
  .status-left { display: flex; gap: 8px; padding-left: 12px; }
  .status-right { display: flex; align-items: center; padding-right: 12px; gap: 8px; }
  .lead { margin-left: 6px; }
  .views { display: flex; gap: 8px; margin: 0 6px 0 1px; }
  .views .on { background: #d6d6d6; border-radius: 4px 4px 0 0; }
  .app .percent { gap: 10px; margin: 0 2px 0 7px; color: #222b45; }

  .app .zoom {
    appearance: none;
    width: 106px;
    height: 10px;
    background: linear-gradient(to right, #1f5fd0 50%, #b5b5b5 50%) center / 100% 2px no-repeat;
  }

  .zoom::-webkit-slider-thumb {
    appearance: none;
    width: 10px;
    height: 10px;
    border: 3px solid #fff;
    border-radius: 50%;
    background: #888;
    box-shadow: 0 0 1px #0008;
  }
</style>
